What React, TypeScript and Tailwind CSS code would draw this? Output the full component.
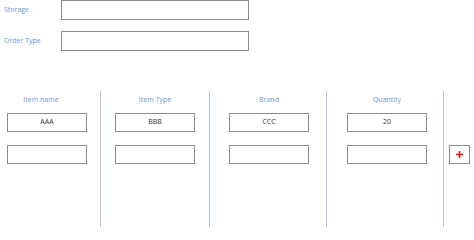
import React from 'react';

const font = { fontFamily: '"Open Sans", "Noto Sans", sans-serif' };

type Col = { label: string; value: string; width: string; inset: string; headerInset: string };

const columns: Col[] = [
  { label: 'Item name', value: 'AAA', width: 'w-[101px]', inset: 'ml-[7px]', headerInset: 'ml-[1px]' },
  { label: 'Item Type', value: 'BBB', width: 'w-[109px]', inset: 'ml-[14px]', headerInset: 'ml-[14px]' },
  { label: 'Brand', value: 'CCC', width: 'w-[117px]', inset: 'ml-[19px]', headerInset: 'ml-[19px]' },
  { label: 'Quantity', value: '20', width: 'w-[117px]', inset: 'ml-[20px]', headerInset: 'ml-[20px]' },
];

function Box({ children, className = '' }: { children?: React.ReactNode; className?: string }) {
  return (
    <div
      className={`h-[19px] w-[80px] border border-[#8c8c8c] bg-white flex items-center justify-center text-[7px] font-normal text-[#333] ${className}`}
    >
      {children}
    </div>
  );
}

export default function App() {
  return (
    <div className="w-[474px] h-[227px] bg-white overflow-hidden" style={font}>
      {/* header fields */}
      <div className="flex flex-col gap-[11px]">
        <div className="flex items-center h-[20px]">
          <div className="w-[61px] pl-[4px] text-[7px] text-[#6b9bd2]">Storage</div>
          <div className="w-[188px] h-[20px] border border-[#8c8c8c]" />
        </div>
        <div className="flex items-center h-[20px]">
          <div className="w-[61px] pl-[4px] text-[7px] text-[#6b9bd2]">Order Type</div>
          <div className="w-[188px] h-[20px] border border-[#8c8c8c]" />
        </div>
      </div>

      {/* item grid */}
      <div className="flex mt-[40px] h-[136px]">
        {columns.map((c) => (
          <div key={c.label} className={`${c.width} border-r border-[#a9c6e6] flex flex-col`}>
            <div className={`${c.headerInset} w-[80px] h-[18px] leading-[18px] text-center text-[7px] text-[#6b9bd2]`}>
              {c.label}
            </div>
            <Box className={`${c.inset} mt-[4px]`}>{c.value}</Box>
            <Box className={`${c.inset} mt-[13px]`} />
          </div>
        ))}
        <div className="flex flex-col pl-[5px]">
          <div className="h-[54px]" />
          <button className="w-[21px] h-[19px] border border-[#8c8c8c] bg-white flex items-center justify-center">
            <svg width="7" height="7" viewBox="0 0 7 7">
              <path d="M3.5 0 V7 M0 3.5 H7" stroke="#e0151c" strokeWidth="1.6" />
            </svg>
          </button>
        </div>
      </div>
    </div>
  );
}
